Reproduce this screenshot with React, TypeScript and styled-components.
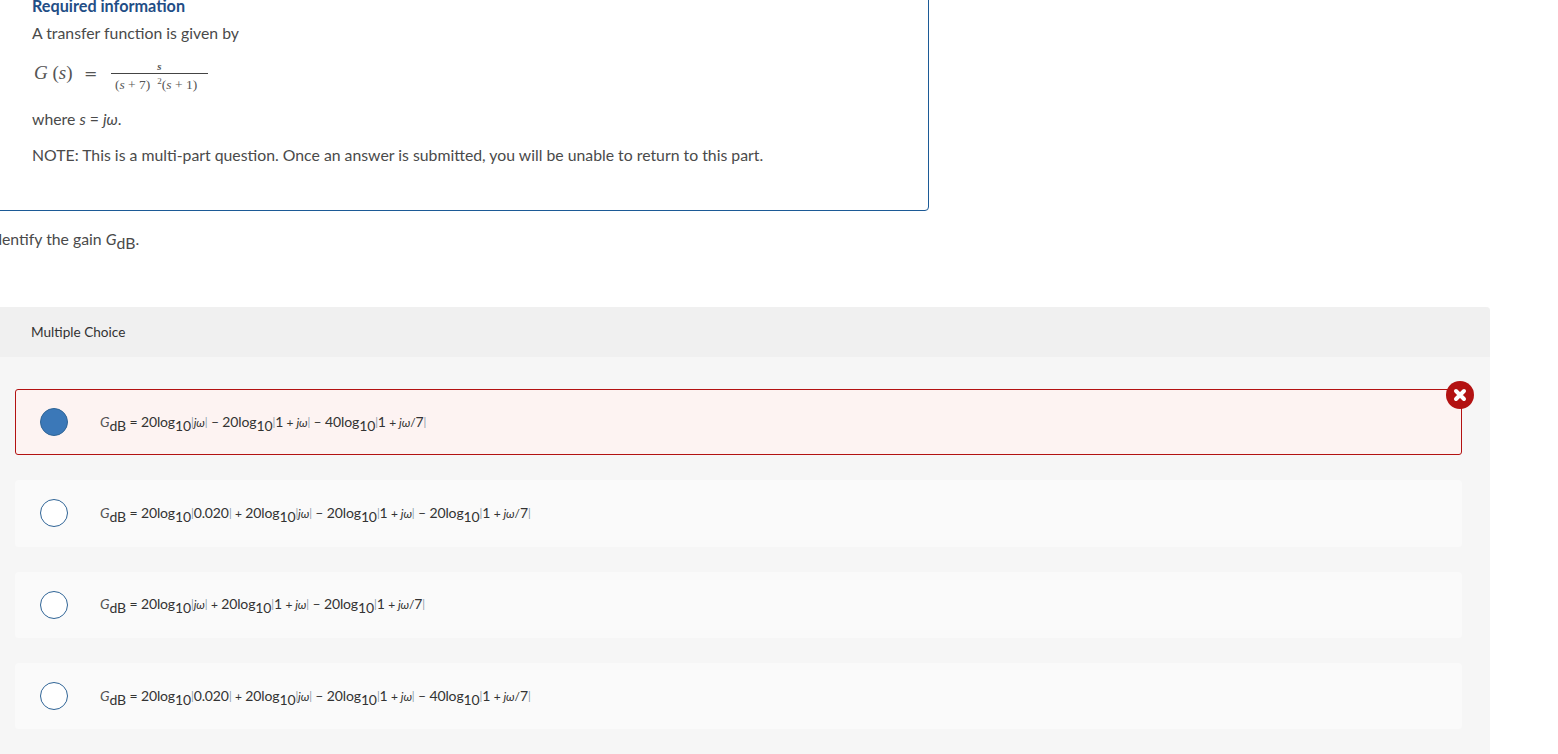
import * as React from 'react';
import styled, { createGlobalStyle } from 'styled-components';

const GlobalStyle = createGlobalStyle`
  html, body {
    margin: 0;
    padding: 0;
    height: 754px;
    overflow: hidden;
    background: #fff;
  }
  body {
    font-family: Lato, "Liberation Sans", sans-serif;
    color: #3a3a3a;
  }
`;

const Page = styled.div`
  margin-left: -20px;
  margin-top: -13px;
  width: 1510px;
`;

const InfoBox = styled.section`
  width: 949px;
  height: 224px;
  box-sizing: border-box;
  padding: 8px 0 0 51px;
  border: 1px solid #1c5a96;
  border-radius: 4px;
`;

const InfoTitle = styled.h2`
  margin: 0;
  font-size: 16.2px;
  line-height: 20px;
  font-weight: 700;
  color: #1f4e86;
`;

const Paragraph = styled.p<{ $gap?: number }>`
  margin: ${p => p.$gap ?? 6}px 0 0;
  font-size: 15.8px;
  line-height: 22px;
  color: #4a4a4a;
`;

const Formula = styled.div`
  display: flex;
  align-items: center;
  height: 36px;
  margin: 15px 0 13px 2px;
  color: #555;
`;

const FormulaLeft = styled.span`
  font-family: "Liberation Serif", serif;
  font-size: 19px;
  width: 50px;
  margin-bottom: 8px;
  white-space: nowrap;
`;

const FormulaEq = styled.span`
  font-family: "DejaVu Serif", serif;
  font-size: 16px;
  width: 27px;
  margin-bottom: 8px;
`;

const Fraction = styled.span`
  display: flex;
  flex-direction: column;
  align-items: center;
  width: 97px;
  font-family: "Liberation Serif", serif;
`;

const Numerator = styled.span`
  font-size: 11px;
  line-height: 12px;
  font-style: italic;
  font-weight: 700;
  height: 13px;
  width: 100%;
  text-align: center;
  border-bottom: 1px solid #444;
`;

const Denominator = styled.span`
  padding-right: 7px;
  font-size: 13.5px;
  line-height: 21px;
  white-space: nowrap;
  color: #555;
`;

const Sup = styled.sup`
  font-size: 9px;
  line-height: 0;
  margin-left: 7px;
  vertical-align: 5px;
`;

const Em = styled.em`
  font-style: italic;
`;

const MathVar = styled.em`
  font-family: "Liberation Serif", serif;
  font-style: italic;
`;

const Prompt = styled.p`
  margin: 16px 0 0 9px;
  font-size: 15.8px;
  line-height: 24px;
  color: #4a4a4a;
  white-space: nowrap;
`;

const PromptSub = styled.sub`
  font-size: 15.8px;
  line-height: 0;
  vertical-align: -4px;
`;

const Panel = styled.section`
  margin-top: 56px;
  background: #f6f6f6;
  border-radius: 4px 4px 0 0;
  height: 460px;
`;

const PanelHeader = styled.header`
  display: flex;
  align-items: center;
  height: 50px;
  padding-left: 51px;
  background: #f0f0f0;
  border-radius: 4px 4px 0 0;
  font-size: 13.6px;
  color: #333;
`;

const ChoiceList = styled.div`
  display: flex;
  flex-direction: column;
  gap: 25px;
  padding: 32px 28px 0 35px;
`;

const Choice = styled.div<{ $wrong?: boolean }>`
  position: relative;
  display: flex;
  align-items: center;
  box-sizing: border-box;
  height: 66.33px;
  padding-left: 24px;
  border-radius: 3px;
  background: ${p => (p.$wrong ? '#fdf3f2' : '#fafafa')};
  border: 1px solid ${p => (p.$wrong ? '#b31212' : '#fafafa')};
`;

const Radio = styled.span<{ $checked?: boolean }>`
  flex: none;
  box-sizing: border-box;
  width: 28px;
  height: 28px;
  border-radius: 50%;
  border: 1.5px solid #2f6496;
  background: ${p => (p.$checked ? '#3b78b8' : '#fff')};
`;

const Expression = styled.span`
  margin-left: 32px;
  font-size: 14px;
  line-height: 20px;
  letter-spacing: -0.12px;
  color: #333;
  white-space: nowrap;
`;

const GVar = styled.i`
  font-size: 14px;
  color: #555;
`;

const Sub = styled.sub`
  font-size: 14px;
  line-height: 0;
  vertical-align: -4px;
`;

const Small = styled.span`
  font-size: 12px;
`;

const Bar = styled.span`
  font-size: 11px;
  color: #8a9aa8;
  vertical-align: 1px;
`;

const WrongBadge = styled.span`
  position: absolute;
  top: -9px;
  right: -13px;
  display: flex;
  align-items: center;
  justify-content: center;
  width: 28px;
  height: 28px;
  border-radius: 50%;
  background: #b31212;
`;

const CrossIcon = () => (
  <svg width="14" height="14" viewBox="0 0 14 14">
    <path d="M3 3 L11 11 M11 3 L3 11" stroke="#fff" strokeWidth="4" strokeLinecap="round" />
  </svg>
);

type Arg = 'jw' | '1jw' | '1jw7' | 'const';

interface Term {
  op?: string;
  coef: number;
  arg: Arg;
}

interface ChoiceData {
  terms: Term[];
  wrong?: boolean;
}

const choices: ChoiceData[] = [
  {
    wrong: true,
    terms: [
      { coef: 20, arg: 'jw' },
      { op: '–', coef: 20, arg: '1jw' },
      { op: '–', coef: 40, arg: '1jw7' }
    ]
  },
  {
    terms: [
      { coef: 20, arg: 'const' },
      { op: '+', coef: 20, arg: 'jw' },
      { op: '–', coef: 20, arg: '1jw' },
      { op: '–', coef: 20, arg: '1jw7' }
    ]
  },
  {
    terms: [
      { coef: 20, arg: 'jw' },
      { op: '+', coef: 20, arg: '1jw' },
      { op: '–', coef: 20, arg: '1jw7' }
    ]
  },
  {
    terms: [
      { coef: 20, arg: 'const' },
      { op: '+', coef: 20, arg: 'jw' },
      { op: '–', coef: 20, arg: '1jw' },
      { op: '–', coef: 40, arg: '1jw7' }
    ]
  }
];

const renderArg = (arg: Arg) => {
  if (arg === 'const') return '0.020';
  if (arg === 'jw') return <Small><Em>jω</Em></Small>;
  if (arg === '1jw') return <>1 <Small>+ <Em>jω</Em></Small></>;
  return <>1 <Small>+ <Em>jω</Em></Small><Small>/</Small>7</>;
};

const App = () => (
  <Page>
    <GlobalStyle />
    <InfoBox>
      <InfoTitle>Required information</InfoTitle>
      <Paragraph>A transfer function is given by</Paragraph>
      <Formula>
        <FormulaLeft><MathVar>G</MathVar> (<MathVar>s</MathVar>)</FormulaLeft>
        <FormulaEq>=</FormulaEq>
        <Fraction>
          <Numerator>s</Numerator>
          <Denominator>(<MathVar>s</MathVar> + 7)<Sup>2</Sup>(<MathVar>s</MathVar> + 1)</Denominator>
        </Fraction>
      </Formula>
      <Paragraph>where <Em>s</Em> = <Em>jω</Em>.</Paragraph>
      <Paragraph $gap={14}>
        NOTE: This is a multi-part question. Once an answer is submitted, you will be unable to return to this part.
      </Paragraph>
    </InfoBox>
    <Prompt>Identify the gain <Em>G</Em><PromptSub>dB</PromptSub>.</Prompt>
    <Panel>
      <PanelHeader>Multiple Choice</PanelHeader>
      <ChoiceList>
        {choices.map((choice, i) => (
          <Choice key={i} $wrong={choice.wrong}>
            <Radio $checked={choice.wrong} />
            <Expression>
              <GVar>G</GVar><Sub>dB</Sub> ={' '}
              {choice.terms.map((term, j) => (
                <React.Fragment key={j}>
                  {term.op ? <> {term.op === '+' ? <Small>+</Small> : term.op} </> : null}
                  {term.coef}log<Sub>10</Sub><Bar>|</Bar>{renderArg(term.arg)}<Bar>|</Bar>
                </React.Fragment>
              ))}
            </Expression>
            {choice.wrong && <WrongBadge><CrossIcon /></WrongBadge>}
          </Choice>
        ))}
      </ChoiceList>
    </Panel>
  </Page>
);

export default App;
